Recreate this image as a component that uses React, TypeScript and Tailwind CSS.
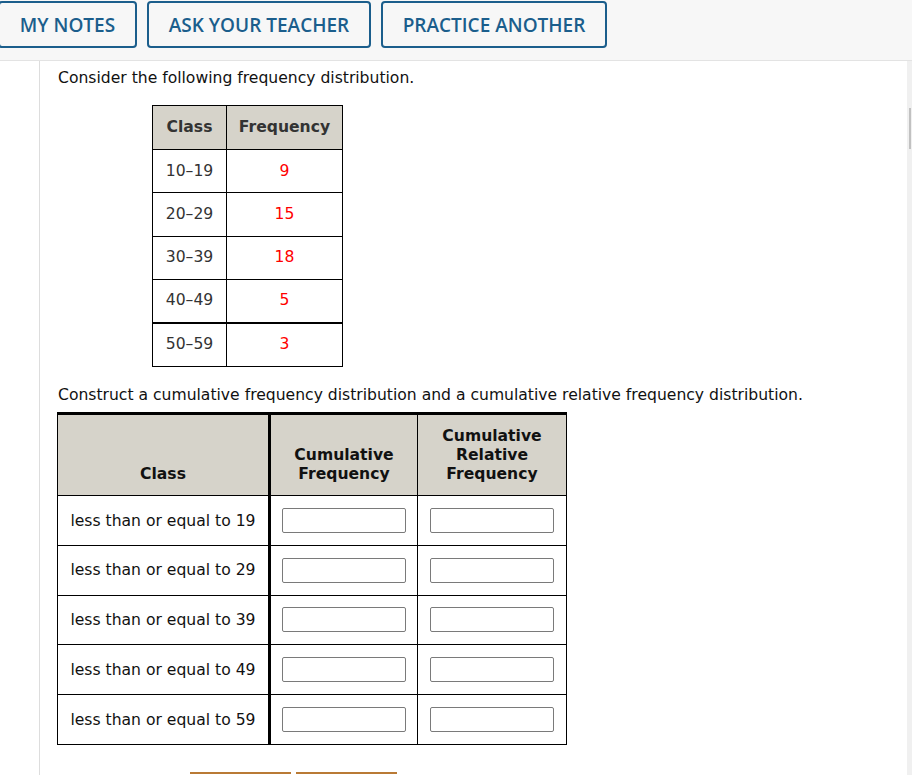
import React from 'react';

const freqRows = [
  { cls: '10\u201319', f: '9' },
  { cls: '20\u201329', f: '15' },
  { cls: '30\u201339', f: '18' },
  { cls: '40\u201349', f: '5' },
  { cls: '50\u201359', f: '3' },
];

const cumRows = [19, 29, 39, 49, 59];

const NavButton = ({ label, className = '' }: { label: string; className?: string }) => (
  <button
    className={`h-[47px] rounded-[4px] border-2 border-[#1b5e8c] bg-[#f7f7f7] pt-[2px] text-[19px] font-semibold text-[#1b5e8c] ${className}`}
    style={{ fontFamily: '"Open Sans", sans-serif' }}
  >
    {label}
  </button>
);

const App = () => {
  return (
    <div className="relative h-[775px] w-[912px] overflow-hidden bg-white" style={{ fontFamily: '"DejaVu Sans", Verdana, sans-serif' }}>
      {/* top toolbar */}
      <div className="flex h-[61px] items-start gap-[10px] border-b border-[#e3e3e3] bg-[#f7f7f7] pt-[1px]">
        <NavButton label="MY NOTES" className="-ml-[2px] w-[139px]" />
        <NavButton label="ASK YOUR TEACHER" className="w-[224px]" />
        <NavButton label="PRACTICE ANOTHER" className="w-[226px]" />
      </div>

      <div className="ml-[39px] min-h-[714px] border-l border-[#dddddd] pl-[18px] pt-[7px]">
        <p className="text-[15.6px] leading-[20px] text-[#111]">Consider the following frequency distribution.</p>

        <table className="mt-[17px] ml-[94px] border-collapse text-[15.6px]">
          <thead>
            <tr className="h-[44px] bg-[#d6d3ca]">
              <th className="w-[74px] border border-black font-bold text-[#333]">Class</th>
              <th className="w-[116px] border border-black font-bold text-[#333]">Frequency</th>
            </tr>
          </thead>
          <tbody>
            {freqRows.map((r, i) => (
              <tr key={r.cls} className={`h-[43.4px] ${i === 4 ? 'border-t-2 border-black' : ''}`}>
                <td className="border border-black text-center text-[#333]">{r.cls}</td>
                <td className="border border-black text-center text-[#ff0000]">{r.f}</td>
              </tr>
            ))}
          </tbody>
        </table>

        <p className="mt-[18px] text-[15.6px] leading-[20px] text-[#111]">
          Construct a cumulative frequency distribution and a cumulative relative frequency distribution.
        </p>

        <table className="mt-[7px] -ml-[1px] border-collapse text-[15.6px] text-[#111]">
          <thead>
            <tr className="h-[82px] border-t-[3px] border-black bg-[#d6d3ca]">
              <th className="w-[212px] border border-black pt-[40px] align-middle font-bold leading-[19px]">Class</th>
              <th className="w-[148px] border border-l-[3px] border-black pt-[21px] font-bold leading-[19px]">
                Cumulative<br />Frequency
              </th>
              <th className="w-[149px] border border-black pt-[2px] font-bold leading-[19px]">
                Cumulative<br />Relative<br />Frequency
              </th>
            </tr>
          </thead>
          <tbody>
            {cumRows.map((n) => (
              <tr key={n} className="h-[49.8px]">
                <td className="border border-black pt-[2px] text-center">less than or equal to {n}</td>
                <td className="border border-l-[3px] border-black text-center">
                  <input className="h-[25px] w-[124px] rounded-[2px] border border-[#7a7a7a] bg-white" />
                </td>
                <td className="border border-black text-center">
                  <input className="h-[25px] w-[124px] rounded-[2px] border border-[#7a7a7a] bg-white" />
                </td>
              </tr>
            ))}
          </tbody>
        </table>

        <div className="mt-[27px] ml-[132px] flex gap-[5px]">
          <div className="h-[10px] w-[101px] border-t-2 border-[#b97a35]" />
          <div className="h-[10px] w-[101px] border-t-2 border-[#b97a35]" />
        </div>
      </div>

      {/* scrollbar */}
      <div className="absolute right-0 top-[61px] h-[714px] w-[5px] bg-[#f0f0f0]">
        <div className="mt-[47px] ml-[2px] h-[41px] w-[2px] bg-[#c1c1c1]" />
      </div>
    </div>
  );
};

export default App;
